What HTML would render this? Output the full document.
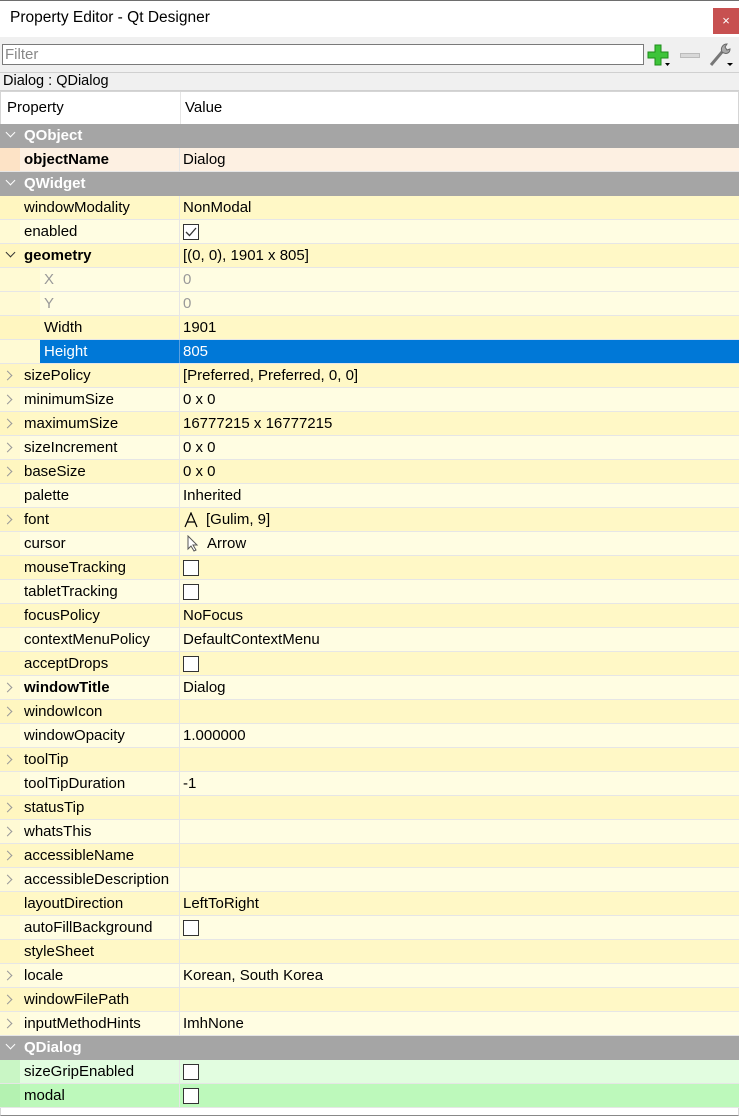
<!DOCTYPE html>
<html><head><meta charset="utf-8"><style>
*{margin:0;padding:0;box-sizing:border-box}
body{width:739px;height:1116px;background:#fff;font-family:"Liberation Sans",sans-serif;font-size:15px;color:#000;position:relative;overflow:hidden}
.top{position:absolute;left:0;top:0;width:739px;height:1px;background:#6e6e6e}
.title{position:absolute;left:10px;top:9px;font-size:15.5px}
.close{position:absolute;left:713px;top:8px;width:26px;height:26px;background:#c75050;color:#fff;font-size:13px;text-align:center;line-height:26px}
.tb{position:absolute;left:0;top:37px;width:739px;height:35px;background:#f0f0f0}
.filter{position:absolute;left:2px;top:44px;width:642px;height:21px;border:1px solid #7a7a7a;background:#fff;color:#888;font-size:15px;line-height:19px;padding-left:2px}
.cls{position:absolute;left:0;top:72px;width:739px;height:19px;background:#f0f0f0;border-top:1px solid #d0d0d0;border-bottom:1px solid #d0d0d0;font-size:14.5px;line-height:17px;padding-left:3px}
.hdr{position:absolute;left:0;top:91px;width:739px;height:33px;border:1px solid #d5d5d5;border-bottom:none;background:#fff;font-size:15px}
.hdr span{position:absolute;top:7px}
.hdr i{position:absolute;left:179px;top:0;height:33px;border-left:1px solid #e5e5e5}
.row{position:absolute;left:0;width:739px;height:24px;border-bottom:1px solid #e6e6e6;line-height:23px}
.row .n{position:absolute;left:24px;top:0}
.row .v{position:absolute;left:183px;top:0}
.row .sep{position:absolute;left:179px;top:0;height:23px;border-left:1px solid #e6e6e6}
.row .ind{position:absolute;left:0;top:0;width:20px;height:23px}
.g{background:#a5a5a5;border-bottom:1px solid #a5a5a5}
.g .n{color:#fff;font-weight:bold}
.g .sep{display:none}
.d{background:#fff8c6}.d .ind{background:#fff6c0}
.l{background:#fffde2}.l .ind{background:#fffad4}
.o{background:#fdf0e2}.o .ind{background:#fde3c6}
.gl{background:#e2fde0}.gl .ind{background:#c9f6c5}
.gd{background:#bdf9bb}.gd .ind{background:#b4f2b1}
.ar{position:absolute;width:7px;height:7px;border-right:1.5px solid #999;border-bottom:1.5px solid #999;transform:rotate(-45deg);left:4px;top:8px}
.ad{position:absolute;left:7px;top:5px;width:7px;height:7px;border-right:1.5px solid #333;border-bottom:1.5px solid #333;transform:rotate(45deg)}
.g .ad{border-color:#fff}
.cb{position:absolute;left:183px;top:4px;width:16px;height:16px;border:1px solid #333;background:#fff}
.sel{position:absolute;left:40px;top:0;right:0;height:23px;background:#0078d7}
</style></head><body>
<div class="top"></div>
<div class="title">Property Editor - Qt Designer</div>
<div class="close">×</div>
<div class="tb"></div>
<div class="filter">Filter</div>
<svg style="position:absolute;left:647px;top:43px" width="26" height="26"><path d="M8 2h6v7h7v6h-7v7H8v-7H1V9h7z" fill="#3ec43a" stroke="#1d8d1a"/><path d="M18 20l5 0-2.5 3z" fill="#000"/></svg>
<div style="position:absolute;left:680px;top:53px;width:20px;height:5px;background:#d8d8d8;border:1px solid #bbb"></div>
<svg style="position:absolute;left:708px;top:42px" width="28" height="26"><path d="M3 23L14 10" stroke="#777" stroke-width="3"/><path d="M14 10c-2-4 1-8 5-8l-2 3 2 3 3-1c0 4-4 6-8 3z" fill="#aaa" stroke="#666"/><path d="M19 21l6 0-3 3z" fill="#000"/></svg>
<div class="cls">Dialog : QDialog</div>
<div class="hdr"><span style="left:6px">Property</span><i></i><span style="left:184px">Value</span></div>

<div class="row g" style="top:124px"><span class="ad"></span><span class="n">QObject</span></div>
<div class="row o" style="top:148px"><div class="ind"></div><span class="n" style="font-weight:bold">objectName</span><i class="sep"></i><span class="v">Dialog</span></div>
<div class="row g" style="top:172px"><span class="ad"></span><span class="n">QWidget</span></div>
<div class="row d" style="top:196px"><div class="ind"></div><span class="n">windowModality</span><i class="sep"></i><span class="v">NonModal</span></div>
<div class="row l" style="top:220px"><div class="ind"></div><span class="n">enabled</span><i class="sep"></i><span class="cb"><svg width="14" height="14" style="position:absolute;left:0;top:0"><path d="M2 7l3.5 3.5L12 3" stroke="#333" fill="none" stroke-width="1.3"/></svg></span></div>
<div class="row d" style="top:244px"><div class="ind"></div><span class="ad"></span><span class="n" style="font-weight:bold">geometry</span><i class="sep"></i><span class="v">[(0, 0), 1901 x 805]</span></div>
<div class="row l" style="top:268px"><div class="ind" style="width:40px"></div><span class="n" style="left:44px;color:#999">X</span><i class="sep"></i><span class="v" style="color:#999">0</span></div>
<div class="row l" style="top:292px"><div class="ind" style="width:40px"></div><span class="n" style="left:44px;color:#999">Y</span><i class="sep"></i><span class="v" style="color:#999">0</span></div>
<div class="row d" style="top:316px"><div class="ind" style="width:40px"></div><span class="n" style="left:44px">Width</span><i class="sep"></i><span class="v">1901</span></div>
<div class="row l" style="top:340px"><div class="ind" style="width:40px"></div><div class="sel"></div><span class="n" style="left:44px;color:#fff">Height</span><i class="sep" style="border-color:#5aa0e0"></i><span class="v" style="color:#fff">805</span></div>
<div class="row d" style="top:364px"><div class="ind"></div><span class="ar"></span><span class="n">sizePolicy</span><i class="sep"></i><span class="v">[Preferred, Preferred, 0, 0]</span></div>
<div class="row l" style="top:388px"><div class="ind"></div><span class="ar"></span><span class="n">minimumSize</span><i class="sep"></i><span class="v">0 x 0</span></div>
<div class="row d" style="top:412px"><div class="ind"></div><span class="ar"></span><span class="n">maximumSize</span><i class="sep"></i><span class="v">16777215 x 16777215</span></div>
<div class="row l" style="top:436px"><div class="ind"></div><span class="ar"></span><span class="n">sizeIncrement</span><i class="sep"></i><span class="v">0 x 0</span></div>
<div class="row d" style="top:460px"><div class="ind"></div><span class="ar"></span><span class="n">baseSize</span><i class="sep"></i><span class="v">0 x 0</span></div>
<div class="row l" style="top:484px"><div class="ind"></div><span class="n">palette</span><i class="sep"></i><span class="v">Inherited</span></div>
<div class="row d" style="top:508px"><div class="ind"></div><span class="ar"></span><span class="n">font</span><i class="sep"></i><svg style="position:absolute;left:183px;top:4px" width="16" height="16"><path d="M2 15L8 1l6 14M4.5 10h7" stroke="#000" fill="none" stroke-width="1.2"/></svg><span class="v" style="left:206px">[Gulim, 9]</span></div>
<div class="row l" style="top:532px"><div class="ind"></div><span class="n">cursor</span><i class="sep"></i><svg style="position:absolute;left:186px;top:3px" width="14" height="18"><path d="M2 1v13l3-3 3 5 2-1-3-5h4z" stroke="#555" fill="#fff"/></svg><span class="v" style="left:207px">Arrow</span></div>
<div class="row d" style="top:556px"><div class="ind"></div><span class="n">mouseTracking</span><i class="sep"></i><span class="cb"></span></div>
<div class="row l" style="top:580px"><div class="ind"></div><span class="n">tabletTracking</span><i class="sep"></i><span class="cb"></span></div>
<div class="row d" style="top:604px"><div class="ind"></div><span class="n">focusPolicy</span><i class="sep"></i><span class="v">NoFocus</span></div>
<div class="row l" style="top:628px"><div class="ind"></div><span class="n">contextMenuPolicy</span><i class="sep"></i><span class="v">DefaultContextMenu</span></div>
<div class="row d" style="top:652px"><div class="ind"></div><span class="n">acceptDrops</span><i class="sep"></i><span class="cb"></span></div>
<div class="row l" style="top:676px"><div class="ind"></div><span class="ar"></span><span class="n" style="font-weight:bold">windowTitle</span><i class="sep"></i><span class="v">Dialog</span></div>
<div class="row d" style="top:700px"><div class="ind"></div><span class="ar"></span><span class="n">windowIcon</span><i class="sep"></i></div>
<div class="row l" style="top:724px"><div class="ind"></div><span class="n">windowOpacity</span><i class="sep"></i><span class="v">1.000000</span></div>
<div class="row d" style="top:748px"><div class="ind"></div><span class="ar"></span><span class="n">toolTip</span><i class="sep"></i></div>
<div class="row l" style="top:772px"><div class="ind"></div><span class="n">toolTipDuration</span><i class="sep"></i><span class="v">-1</span></div>
<div class="row d" style="top:796px"><div class="ind"></div><span class="ar"></span><span class="n">statusTip</span><i class="sep"></i></div>
<div class="row l" style="top:820px"><div class="ind"></div><span class="ar"></span><span class="n">whatsThis</span><i class="sep"></i></div>
<div class="row d" style="top:844px"><div class="ind"></div><span class="ar"></span><span class="n">accessibleName</span><i class="sep"></i></div>
<div class="row l" style="top:868px"><div class="ind"></div><span class="ar"></span><span class="n">accessibleDescription</span><i class="sep"></i></div>
<div class="row d" style="top:892px"><div class="ind"></div><span class="n">layoutDirection</span><i class="sep"></i><span class="v">LeftToRight</span></div>
<div class="row l" style="top:916px"><div class="ind"></div><span class="n">autoFillBackground</span><i class="sep"></i><span class="cb"></span></div>
<div class="row d" style="top:940px"><div class="ind"></div><span class="n">styleSheet</span><i class="sep"></i></div>
<div class="row l" style="top:964px"><div class="ind"></div><span class="ar"></span><span class="n">locale</span><i class="sep"></i><span class="v">Korean, South Korea</span></div>
<div class="row d" style="top:988px"><div class="ind"></div><span class="ar"></span><span class="n">windowFilePath</span><i class="sep"></i></div>
<div class="row l" style="top:1012px"><div class="ind"></div><span class="ar"></span><span class="n">inputMethodHints</span><i class="sep"></i><span class="v">ImhNone</span></div>
<div class="row g" style="top:1036px"><span class="ad"></span><span class="n">QDialog</span></div>
<div class="row gl" style="top:1060px"><div class="ind"></div><span class="n">sizeGripEnabled</span><i class="sep"></i><span class="cb"></span></div>
<div class="row gd" style="top:1084px"><div class="ind"></div><span class="n">modal</span><i class="sep"></i><span class="cb"></span></div>
<div style="position:absolute;left:0;top:1108px;width:739px;height:8px;border-left:1px solid #d5d5d5;border-right:1px solid #d5d5d5;border-bottom:1px solid #888"></div>
</body></html>
